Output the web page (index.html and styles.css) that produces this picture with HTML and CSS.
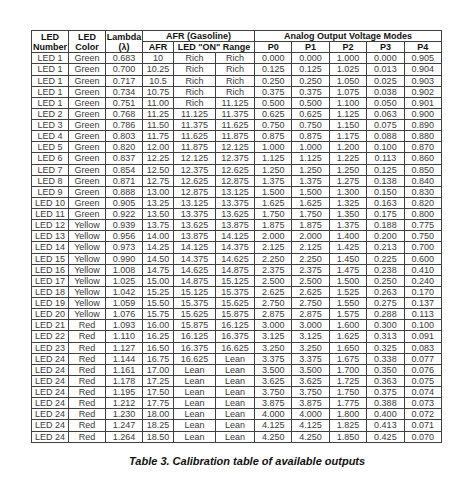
FILE: index.html
```html
<!DOCTYPE html>
<html>
<head>
<meta charset="utf-8">
<link rel="stylesheet" href="styles.css">
</head>
<body>
<div class="page">
<table class="cal">
<colgroup>
<col class="c-num"><col class="c-color"><col class="c-lambda"><col class="c-afr"><col class="c-r1"><col class="c-r2"><col class="c-p"><col class="c-p"><col class="c-p"><col class="c-p"><col class="c-p">
</colgroup>
<thead>
<tr><th rowspan="2">LED<br>Number</th><th rowspan="2">LED<br>Color</th><th rowspan="2">Lambda<br>(λ)</th><th colspan="3">AFR (Gasoline)</th><th colspan="5">Analog Output Voltage Modes</th></tr>
<tr><th>AFR</th><th colspan="2">LED "ON" Range</th><th>P0</th><th>P1</th><th>P2</th><th>P3</th><th>P4</th></tr>
</thead>
<tbody>
<tr><td>LED 1</td><td>Green</td><td>0.683</td><td>10</td><td>Rich</td><td>Rich</td><td>0.000</td><td>0.000</td><td>1.000</td><td>0.000</td><td>0.905</td></tr>
<tr><td>LED 1</td><td>Green</td><td>0.700</td><td>10.25</td><td>Rich</td><td>Rich</td><td>0.125</td><td>0.125</td><td>1.025</td><td>0.013</td><td>0.904</td></tr>
<tr><td>LED 1</td><td>Green</td><td>0.717</td><td>10.5</td><td>Rich</td><td>Rich</td><td>0.250</td><td>0.250</td><td>1.050</td><td>0.025</td><td>0.903</td></tr>
<tr><td>LED 1</td><td>Green</td><td>0.734</td><td>10.75</td><td>Rich</td><td>Rich</td><td>0.375</td><td>0.375</td><td>1.075</td><td>0.038</td><td>0.902</td></tr>
<tr><td>LED 1</td><td>Green</td><td>0.751</td><td>11.00</td><td>Rich</td><td>11.125</td><td>0.500</td><td>0.500</td><td>1.100</td><td>0.050</td><td>0.901</td></tr>
<tr><td>LED 2</td><td>Green</td><td>0.768</td><td>11.25</td><td>11.125</td><td>11.375</td><td>0.625</td><td>0.625</td><td>1.125</td><td>0.063</td><td>0.900</td></tr>
<tr><td>LED 3</td><td>Green</td><td>0.786</td><td>11.50</td><td>11.375</td><td>11.625</td><td>0.750</td><td>0.750</td><td>1.150</td><td>0.075</td><td>0.890</td></tr>
<tr><td>LED 4</td><td>Green</td><td>0.803</td><td>11.75</td><td>11.625</td><td>11.875</td><td>0.875</td><td>0.875</td><td>1.175</td><td>0.088</td><td>0.880</td></tr>
<tr><td>LED 5</td><td>Green</td><td>0.820</td><td>12.00</td><td>11.875</td><td>12.125</td><td>1.000</td><td>1.000</td><td>1.200</td><td>0.100</td><td>0.870</td></tr>
<tr><td>LED 6</td><td>Green</td><td>0.837</td><td>12.25</td><td>12.125</td><td>12.375</td><td>1.125</td><td>1.125</td><td>1.225</td><td>0.113</td><td>0.860</td></tr>
<tr><td>LED 7</td><td>Green</td><td>0.854</td><td>12.50</td><td>12.375</td><td>12.625</td><td>1.250</td><td>1.250</td><td>1.250</td><td>0.125</td><td>0.850</td></tr>
<tr><td>LED 8</td><td>Green</td><td>0.871</td><td>12.75</td><td>12.625</td><td>12.875</td><td>1.375</td><td>1.375</td><td>1.275</td><td>0.138</td><td>0.840</td></tr>
<tr><td>LED 9</td><td>Green</td><td>0.888</td><td>13.00</td><td>12.875</td><td>13.125</td><td>1.500</td><td>1.500</td><td>1.300</td><td>0.150</td><td>0.830</td></tr>
<tr><td>LED 10</td><td>Green</td><td>0.905</td><td>13.25</td><td>13.125</td><td>13.375</td><td>1.625</td><td>1.625</td><td>1.325</td><td>0.163</td><td>0.820</td></tr>
<tr><td>LED 11</td><td>Green</td><td>0.922</td><td>13.50</td><td>13.375</td><td>13.625</td><td>1.750</td><td>1.750</td><td>1.350</td><td>0.175</td><td>0.800</td></tr>
<tr><td>LED 12</td><td>Yellow</td><td>0.939</td><td>13.75</td><td>13.625</td><td>13.875</td><td>1.875</td><td>1.875</td><td>1.375</td><td>0.188</td><td>0.775</td></tr>
<tr><td>LED 13</td><td>Yellow</td><td>0.956</td><td>14.00</td><td>13.875</td><td>14.125</td><td>2.000</td><td>2.000</td><td>1.400</td><td>0.200</td><td>0.750</td></tr>
<tr><td>LED 14</td><td>Yellow</td><td>0.973</td><td>14.25</td><td>14.125</td><td>14.375</td><td>2.125</td><td>2.125</td><td>1.425</td><td>0.213</td><td>0.700</td></tr>
<tr><td>LED 15</td><td>Yellow</td><td>0.990</td><td>14.50</td><td>14.375</td><td>14.625</td><td>2.250</td><td>2.250</td><td>1.450</td><td>0.225</td><td>0.600</td></tr>
<tr><td>LED 16</td><td>Yellow</td><td>1.008</td><td>14.75</td><td>14.625</td><td>14.875</td><td>2.375</td><td>2.375</td><td>1.475</td><td>0.238</td><td>0.410</td></tr>
<tr><td>LED 17</td><td>Yellow</td><td>1.025</td><td>15.00</td><td>14.875</td><td>15.125</td><td>2.500</td><td>2.500</td><td>1.500</td><td>0.250</td><td>0.240</td></tr>
<tr><td>LED 18</td><td>Yellow</td><td>1.042</td><td>15.25</td><td>15.125</td><td>15.375</td><td>2.625</td><td>2.625</td><td>1.525</td><td>0.263</td><td>0.170</td></tr>
<tr><td>LED 19</td><td>Yellow</td><td>1.059</td><td>15.50</td><td>15.375</td><td>15.625</td><td>2.750</td><td>2.750</td><td>1.550</td><td>0.275</td><td>0.137</td></tr>
<tr><td>LED 20</td><td>Yellow</td><td>1.076</td><td>15.75</td><td>15.625</td><td>15.875</td><td>2.875</td><td>2.875</td><td>1.575</td><td>0.288</td><td>0.113</td></tr>
<tr><td>LED 21</td><td>Red</td><td>1.093</td><td>16.00</td><td>15.875</td><td>16.125</td><td>3.000</td><td>3.000</td><td>1.600</td><td>0.300</td><td>0.100</td></tr>
<tr><td>LED 22</td><td>Red</td><td>1.110</td><td>16.25</td><td>16.125</td><td>16.375</td><td>3.125</td><td>3.125</td><td>1.625</td><td>0.313</td><td>0.091</td></tr>
<tr><td>LED 23</td><td>Red</td><td>1.127</td><td>16.50</td><td>16.375</td><td>16.625</td><td>3.250</td><td>3.250</td><td>1.650</td><td>0.325</td><td>0.083</td></tr>
<tr><td>LED 24</td><td>Red</td><td>1.144</td><td>16.75</td><td>16.625</td><td>Lean</td><td>3.375</td><td>3.375</td><td>1.675</td><td>0.338</td><td>0.077</td></tr>
<tr><td>LED 24</td><td>Red</td><td>1.161</td><td>17.00</td><td>Lean</td><td>Lean</td><td>3.500</td><td>3.500</td><td>1.700</td><td>0.350</td><td>0.076</td></tr>
<tr><td>LED 24</td><td>Red</td><td>1.178</td><td>17.25</td><td>Lean</td><td>Lean</td><td>3.625</td><td>3.625</td><td>1.725</td><td>0.363</td><td>0.075</td></tr>
<tr><td>LED 24</td><td>Red</td><td>1.195</td><td>17.50</td><td>Lean</td><td>Lean</td><td>3.750</td><td>3.750</td><td>1.750</td><td>0.375</td><td>0.074</td></tr>
<tr><td>LED 24</td><td>Red</td><td>1.212</td><td>17.75</td><td>Lean</td><td>Lean</td><td>3.875</td><td>3.875</td><td>1.775</td><td>0.388</td><td>0.073</td></tr>
<tr><td>LED 24</td><td>Red</td><td>1.230</td><td>18.00</td><td>Lean</td><td>Lean</td><td>4.000</td><td>4.000</td><td>1.800</td><td>0.400</td><td>0.072</td></tr>
<tr><td>LED 24</td><td>Red</td><td>1.247</td><td>18.25</td><td>Lean</td><td>Lean</td><td>4.125</td><td>4.125</td><td>1.825</td><td>0.413</td><td>0.071</td></tr>
<tr><td>LED 24</td><td>Red</td><td>1.264</td><td>18.50</td><td>Lean</td><td>Lean</td><td>4.250</td><td>4.250</td><td>1.850</td><td>0.425</td><td>0.070</td></tr>
</tbody>
</table>
<p class="caption">Table 3. Calibration table of available outputs</p>
</div>
</body>
</html>
```
FILE: styles.css
```css
html, body {
  margin: 0;
  padding: 0;
  background: #ffffff;
}
.page {
  padding: 30px 0 0 31px;
  font-family: "Liberation Sans", Arial, sans-serif;
}
.cal {
  border-collapse: collapse;
  table-layout: fixed;
  width: 411px;
  font-size: 9px;
  line-height: 10px;
  color: #3a3a3a;
}
.cal th, .cal td {
  border: 1px solid #404040;
  padding: 0;
  text-align: center;
  white-space: nowrap;
  overflow: hidden;
}
.cal tr {
  height: 11.14px;
}
.cal th {
  font-weight: bold;
  color: #111;
}
.c-num { width: 37px; }
.c-color { width: 37px; }
.c-lambda { width: 37px; }
.c-afr { width: 31px; }
.c-r1 { width: 42px; }
.c-r2 { width: 39px; }
.c-p { width: 37.4px; }
.caption {
  margin: 12px 0 0 98px;
  font-size: 11px;
  font-weight: bold;
  font-style: italic;
  color: #111;
}
```
